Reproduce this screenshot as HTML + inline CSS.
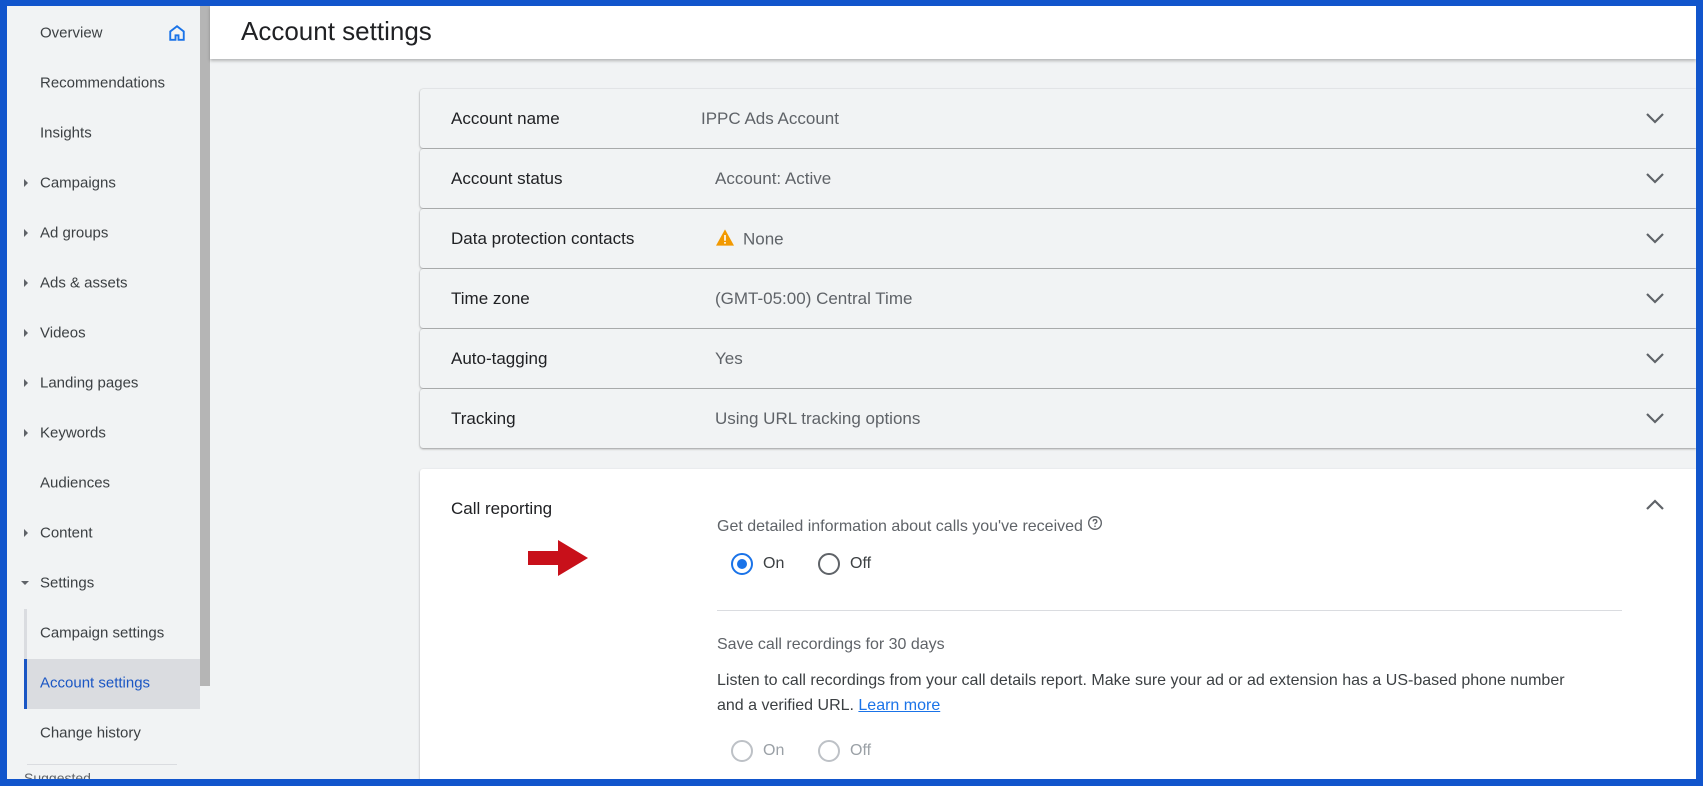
<!DOCTYPE html>
<html><head><meta charset="utf-8"><style>
*{margin:0;padding:0;box-sizing:border-box}
body{width:1703px;height:786px;overflow:hidden;background:#1155cc;font-family:"Liberation Sans",Arial,sans-serif;position:relative}
.frame{position:absolute;left:7px;top:6px;width:1689px;height:773px;background:#f1f3f4;overflow:hidden}
.side{position:absolute;left:0;top:0;width:193px;height:773px;background:#f1f3f4}
.sb{position:absolute;left:193px;top:0;width:10px;height:680px;background:#b5b5b5}
.si{position:absolute;left:33px;font-size:15px;color:#3c4043;transform:translateY(-50%)}
.ar{position:absolute;left:17px;width:0;height:0;border-top:4px solid transparent;border-bottom:4px solid transparent;border-left:4px solid #5f6368;transform:translateY(-50%)}
.hdr{position:absolute;left:203px;top:0;right:0;height:53px;background:#fff;box-shadow:0 2px 3px rgba(0,0,0,.25)}
.hdr h1{position:absolute;left:31px;top:10px;font-weight:400;font-size:26px;color:#202124}
.row{position:absolute;left:413px;right:0;height:59px;background:#f1f3f4;box-shadow:0 1px 2px rgba(0,0,0,.35),0 0 1px rgba(0,0,0,.2);border-radius:3px 0 0 3px}
.row .l{position:absolute;left:31px;top:50%;transform:translateY(-50%);font-size:17px;color:#202124}
.row .v{position:absolute;left:295px;top:50%;transform:translateY(-50%);font-size:17px;color:#5f6368}
.chev{position:absolute;right:31px;top:50%;margin-top:-7px}
.card{position:absolute;left:413px;right:0;top:463px;height:320px;background:#fff;box-shadow:0 1px 2px rgba(0,0,0,.3);border-radius:3px 0 0 0}
.t{position:absolute;font-size:16px;color:#5f6368}
.radio{position:absolute;width:22px;height:22px;border-radius:50%;border:2px solid #5f6368}
</style></head><body>
<div class="frame">
<div class="side">
<div class="si" style="top:27px">Overview</div>
<svg style="position:absolute;left:161px;top:18px" width="18" height="18" viewBox="0 0 24 24"><path d="M12 3 3 10v11h7v-6h4v6h7V10z" fill="none" stroke="#1a73e8" stroke-width="2.5"/></svg>
<div class="si" style="top:77px">Recommendations</div>
<div class="si" style="top:127px">Insights</div>
<div class="ar" style="top:177px"></div><div class="si" style="top:177px">Campaigns</div>
<div class="ar" style="top:227px"></div><div class="si" style="top:227px">Ad groups</div>
<div class="ar" style="top:277px"></div><div class="si" style="top:277px">Ads &amp; assets</div>
<div class="ar" style="top:327px"></div><div class="si" style="top:327px">Videos</div>
<div class="ar" style="top:377px"></div><div class="si" style="top:377px">Landing pages</div>
<div class="ar" style="top:427px"></div><div class="si" style="top:427px">Keywords</div>
<div class="si" style="top:477px">Audiences</div>
<div class="ar" style="top:527px"></div><div class="si" style="top:527px">Content</div>
<div style="position:absolute;left:14px;top:575px;border-left:4px solid transparent;border-right:4px solid transparent;border-top:4px solid #5f6368"></div><div class="si" style="top:577px">Settings</div>
<div style="position:absolute;left:17px;top:603px;width:3px;height:50px;background:#dadce0"></div>
<div class="si" style="top:627px">Campaign settings</div>
<div style="position:absolute;left:17px;top:653px;width:176px;height:50px;background:#dadce0;border-left:3px solid #1a56c4"></div>
<div class="si" style="top:677px;color:#1a56c4">Account settings</div>
<div class="si" style="top:727px">Change history</div>
<div style="position:absolute;left:20px;top:758px;width:150px;height:1px;background:#dadce0"></div>
<div class="si" style="top:772px;left:17px;font-size:14px;color:#5f6368">Suggested</div>
</div>
<div class="sb"></div>
<div class="hdr"><h1>Account settings</h1></div>

<div class="row" style="top:83px"><div class="l">Account name</div><div class="v" style="left:281px">IPPC Ads Account</div><svg class="chev" width="20" height="12" viewBox="0 0 20 12"><path d="M2 2l8 8 8-8" fill="none" stroke="#5f6368" stroke-width="2.2"/></svg></div>
<div class="row" style="top:143px"><div class="l">Account status</div><div class="v">Account: Active</div><svg class="chev" width="20" height="12" viewBox="0 0 20 12"><path d="M2 2l8 8 8-8" fill="none" stroke="#5f6368" stroke-width="2.2"/></svg></div>
<div class="row" style="top:203px"><div class="l">Data protection contacts</div><div class="v"><svg width="20" height="18" viewBox="0 0 24 22" style="vertical-align:-2px;margin-right:8px"><path d="M12 1 1 21h22z" fill="#f29900"/><rect x="11" y="8" width="2" height="7" fill="#fff"/><rect x="11" y="16.5" width="2" height="2" fill="#fff"/></svg>None</div><svg class="chev" width="20" height="12" viewBox="0 0 20 12"><path d="M2 2l8 8 8-8" fill="none" stroke="#5f6368" stroke-width="2.2"/></svg></div>
<div class="row" style="top:263px"><div class="l">Time zone</div><div class="v">(GMT-05:00) Central Time</div><svg class="chev" width="20" height="12" viewBox="0 0 20 12"><path d="M2 2l8 8 8-8" fill="none" stroke="#5f6368" stroke-width="2.2"/></svg></div>
<div class="row" style="top:323px"><div class="l">Auto-tagging</div><div class="v">Yes</div><svg class="chev" width="20" height="12" viewBox="0 0 20 12"><path d="M2 2l8 8 8-8" fill="none" stroke="#5f6368" stroke-width="2.2"/></svg></div>
<div class="row" style="top:383px"><div class="l">Tracking</div><div class="v">Using URL tracking options</div><svg class="chev" width="20" height="12" viewBox="0 0 20 12"><path d="M2 2l8 8 8-8" fill="none" stroke="#5f6368" stroke-width="2.2"/></svg></div>

<div class="card">
<div style="position:absolute;left:31px;top:30px;font-size:17px;color:#202124">Call reporting</div>
<svg style="position:absolute;right:31px;top:30px" width="20" height="12" viewBox="0 0 20 12"><path d="M2 10l8-8 8 8" fill="none" stroke="#5f6368" stroke-width="2.2"/></svg>
<svg style="position:absolute;left:108px;top:71px" width="60" height="36" viewBox="0 0 60 36"><path d="M0 11h30V0l30 18-30 18V25H0z" fill="#c8101a"/></svg>
<div class="t" style="left:297px;top:46px">Get detailed information about calls you've received <svg width="16" height="16" viewBox="0 0 24 24" style="vertical-align:0"><circle cx="12" cy="12" r="9.5" fill="none" stroke="#5f6368" stroke-width="2"/><path d="M9.3 9.5a2.7 2.7 0 1 1 3.7 2.5c-.7.4-1 .8-1 1.8" fill="none" stroke="#5f6368" stroke-width="2"/><circle cx="12" cy="16.8" r="1.2" fill="#5f6368"/></svg></div>
<div class="radio" style="left:311px;top:84px;border-color:#1a73e8"><div style="position:absolute;left:4px;top:4px;width:10px;height:10px;border-radius:50%;background:#1a73e8"></div></div>
<div class="t" style="left:343px;top:86px;color:#3c4043">On</div>
<div class="radio" style="left:398px;top:84px"></div>
<div class="t" style="left:430px;top:86px;color:#3c4043">Off</div>
<div style="position:absolute;left:297px;top:141px;width:905px;height:1px;background:#dadce0"></div>
<div class="t" style="left:297px;top:167px">Save call recordings for 30 days</div>
<div class="t" style="left:297px;top:199px;color:#3c4043;line-height:25px;width:860px">Listen to call recordings from your call details report. Make sure your ad or ad extension has a US-based phone number and a verified URL. <span style="color:#1a73e8;text-decoration:underline">Learn more</span></div>
<div class="radio" style="left:311px;top:271px;border-color:#bdc1c6"></div>
<div class="t" style="left:343px;top:273px;color:#9aa0a6">On</div>
<div class="radio" style="left:398px;top:271px;border-color:#bdc1c6"></div>
<div class="t" style="left:430px;top:273px;color:#9aa0a6">Off</div>
</div>
</div>
</body></html>
